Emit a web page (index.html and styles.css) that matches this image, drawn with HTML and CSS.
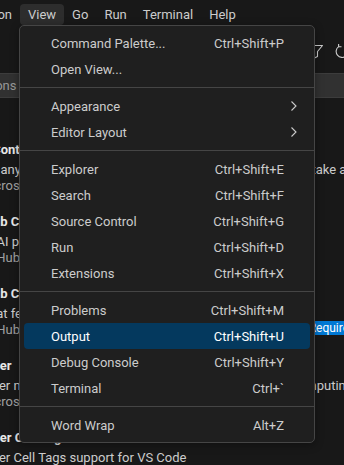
FILE: index.html
```html
<!DOCTYPE html>
<html lang="en">
<head>
<meta charset="utf-8">
<title>View menu</title>
<link rel="stylesheet" href="styles.css">
</head>
<body>
<div class="window">
  <header class="titlebar">
    <nav class="menubar">
      <div class="mb-clip"><span class="mb-item">Selection</span></div>
      <span class="mb-item active">View</span>
      <span class="mb-item">Go</span>
      <span class="mb-item">Run</span>
      <span class="mb-item">Terminal</span>
      <span class="mb-item">Help</span>
    </nav>
  </header>

  <aside class="sidebar">
    <div class="sb-header">
      <span class="sb-title">EXTENSIONS</span>
      <div class="sb-actions">
        <svg viewBox="0 0 16 16" class="icon"><path d="M1.5 2.5h13l-5 6v5l-3 1.5v-6.5z" fill="none" stroke="#cccccc" stroke-width="1.1" stroke-linejoin="round"/></svg>
        <svg viewBox="0 0 16 16" class="icon"><path d="M4.6 3.6A6 6 0 1 0 12.6 4.4" fill="none" stroke="#cccccc" stroke-width="1.1"/><path d="M4.6 0.9v2.9h2.9" fill="none" stroke="#cccccc" stroke-width="1.1"/></svg>
      </div>
    </div>
    <div class="search"><span class="placeholder">Search Extensions in Marketplace</span></div>
    <div class="pane-header">INSTALLED</div>
    <ul class="ext-list">
      <li class="ext">
        <div class="ext-icon"></div>
        <div class="ext-details">
          <div class="ext-name">Dev Containers</div>
          <div class="ext-desc">Open any folder or repository inside a Docker container and take advantage of Visual Studio Code's full feature set.</div>
          <div class="ext-footer"><span class="author"><svg class="verified" viewBox="0 0 12 12"><circle cx="6" cy="6" r="5" fill="#3794ff"/></svg>Microsoft</span></div>
        </div>
      </li>
      <li class="ext">
        <div class="ext-icon"></div>
        <div class="ext-details">
          <div class="ext-name">GitHub Copilot</div>
          <div class="ext-desc">Your AI pair programmer</div>
          <div class="ext-footer"><span class="author"><svg class="verified" viewBox="0 0 12 12"><circle cx="6" cy="6" r="5" fill="#3794ff"/></svg>GitHub</span></div>
        </div>
      </li>
      <li class="ext">
        <div class="ext-icon"></div>
        <div class="ext-details">
          <div class="ext-name">GitHub Copilot Chat</div>
          <div class="ext-desc">AI chat features powered by Copilot</div>
          <div class="ext-footer"><span class="author"><svg class="verified" viewBox="0 0 12 12"><circle cx="6" cy="6" r="5" fill="#3794ff"/></svg>GitHub</span><span class="ext-btn">Restart Required</span></div>
        </div>
      </li>
      <li class="ext">
        <div class="ext-icon"></div>
        <div class="ext-details">
          <div class="ext-name">Jupyter</div>
          <div class="ext-desc">Jupyter notebook support, interactive programming and computing that supports Intellisense, debugging and more.</div>
          <div class="ext-footer"><span class="author"><svg class="verified" viewBox="0 0 12 12"><circle cx="6" cy="6" r="5" fill="#3794ff"/></svg>Microsoft</span></div>
        </div>
      </li>
      <li class="ext">
        <div class="ext-icon"></div>
        <div class="ext-details">
          <div class="ext-name">Jupyter Cell Tags</div>
          <div class="ext-desc">Jupyter Cell Tags support for VS Code</div>
          <div class="ext-footer"><span class="author"><svg class="verified" viewBox="0 0 12 12"><circle cx="6" cy="6" r="5" fill="#3794ff"/></svg>Microsoft</span></div>
        </div>
      </li>
    </ul>
  </aside>

  <div class="menu" role="menu">
    <div class="menu-item"><span class="label">Command Palette...</span><span class="kb">Ctrl+Shift+P</span></div>
    <div class="menu-item"><span class="label">Open View...</span></div>
    <div class="sep"></div>
    <div class="menu-item sub"><span class="label">Appearance</span><svg class="chev" viewBox="0 0 8 12"><polyline points="1.5,1.5 6,6 1.5,10.5" fill="none" stroke="#cccccc" stroke-width="1.1"/></svg></div>
    <div class="menu-item sub"><span class="label">Editor Layout</span><svg class="chev" viewBox="0 0 8 12"><polyline points="1.5,1.5 6,6 1.5,10.5" fill="none" stroke="#cccccc" stroke-width="1.1"/></svg></div>
    <div class="sep"></div>
    <div class="menu-item"><span class="label">Explorer</span><span class="kb">Ctrl+Shift+E</span></div>
    <div class="menu-item"><span class="label">Search</span><span class="kb">Ctrl+Shift+F</span></div>
    <div class="menu-item"><span class="label">Source Control</span><span class="kb">Ctrl+Shift+G</span></div>
    <div class="menu-item"><span class="label">Run</span><span class="kb">Ctrl+Shift+D</span></div>
    <div class="menu-item"><span class="label">Extensions</span><span class="kb">Ctrl+Shift+X</span></div>
    <div class="sep"></div>
    <div class="menu-item"><span class="label">Problems</span><span class="kb">Ctrl+Shift+M</span></div>
    <div class="menu-item selected"><span class="label">Output</span><span class="kb">Ctrl+Shift+U</span></div>
    <div class="menu-item"><span class="label">Debug Console</span><span class="kb">Ctrl+Shift+Y</span></div>
    <div class="menu-item"><span class="label">Terminal</span><span class="kb">Ctrl+`</span></div>
    <div class="sep"></div>
    <div class="menu-item"><span class="label">Word Wrap</span><span class="kb">Alt+Z</span></div>
  </div>
</div>
</body>
</html>
```

FILE: styles.css
```css
* { box-sizing: border-box; margin: 0; padding: 0; }

html, body {
  width: 344px;
  height: 465px;
  overflow: hidden;
  background: #181818;
}

body {
  font-family: Roboto, "Open Sans", sans-serif;
  font-size: 13px;
  color: #cccccc;
}

.window {
  position: relative;
  width: 344px;
  height: 465px;
  overflow: hidden;
  background: #181818;
}

/* title bar */
.titlebar {
  height: 32px;
  display: flex;
}

.menubar {
  display: flex;
  align-items: flex-start;
  padding-top: 4px;
}

.mb-clip {
  width: 20px;
  overflow: hidden;
  display: flex;
  justify-content: flex-end;
}

.mb-item {
  flex-shrink: 0;
  height: 21px;
  line-height: 21px;
  padding: 0 8px;
  white-space: nowrap;
  border-radius: 4px;
  color: #cccccc;
}

.mb-item.active { background: #2d2d2d; }

/* side bar */
.sidebar {
  margin-left: -96px;
  width: 460px;
}

.sb-header {
  height: 38px;
  display: flex;
  align-items: center;
  justify-content: space-between;
  padding: 0 14px 0 20px;
}

.sb-title { font-size: 11px; font-weight: 600; }

.sb-actions { display: flex; gap: 10px; }

.icon { width: 16px; height: 16px; display: block; }

.search {
  margin: 3px 0 0 4px;
  height: 25px;
  background: #313131;
  border: 1px solid #3c3c3c;
  border-radius: 2px;
  padding-left: 1px;
  display: flex;
  align-items: center;
  white-space: nowrap;
  color: #989898;
}

.pane-header {
  height: 22px;
  margin-top: 6px;
  padding-left: 20px;
  line-height: 22px;
  font-size: 11px;
  font-weight: 600;
}

.ext-list {
  list-style: none;
  margin-top: 12px;
}

.ext {
  display: flex;
  height: 72px;
}

.ext-icon {
  width: 42px;
  height: 42px;
  margin: 15px 11px 0 10px;
  flex-shrink: 0;
  background: #2b2b2b;
  border-radius: 4px;
}

.ext-details {
  flex: 1;
  min-width: 0;
  padding-top: 2px;
  display: flex;
  flex-direction: column;
  overflow: hidden;
}

.ext-name {
  line-height: 20px;
  font-weight: 700;
  color: #e7e7e7;
  white-space: nowrap;
}

.ext-desc {
  line-height: 19px;
  white-space: nowrap;
  color: #cccccc;
}

.ext-footer {
  display: flex;
  align-items: flex-start;
  height: 14px;
  line-height: 14px;
  white-space: nowrap;
  color: #a0a0a0;
}

.author {
  display: flex;
  align-items: center;
  gap: 1px;
  width: 296px;
  flex-shrink: 0;
}

.verified { width: 12px; height: 12px; flex-shrink: 0; }

.ext-btn {
  margin-top: -2px;
  height: 14px;
  line-height: 14px;
  padding: 0 4px;
  font-size: 12px;
  background: #0078d4;
  color: #ffffff;
  border-radius: 2px;
}

/* dropdown menu */
.menu {
  position: absolute;
  left: 19px;
  top: 25px;
  width: 296px;
  padding: 4px 0;
  background: #1f1f1f;
  border: 1px solid #454545;
  border-radius: 5px;
  box-shadow: 0 2px 8px rgba(0, 0, 0, 0.36);
}

.menu-item {
  display: flex;
  align-items: center;
  height: 26px;
  margin: 0 4px;
  padding: 0 26px 0 27px;
  border-radius: 4px;
  color: #cccccc;
  white-space: nowrap;
}

.menu-item .label { flex: 1; }

.menu-item.sub { padding-right: 12px; }

.chev { width: 8px; height: 12px; display: block; }

.menu-item.selected {
  background: #04395e;
  color: #ffffff;
}

.sep {
  height: 1px;
  margin: 5px 0;
  background: #454545;
}
```
